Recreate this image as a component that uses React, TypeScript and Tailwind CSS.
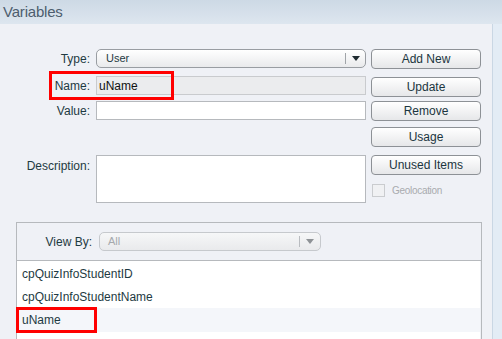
import React from "react"

const font = { fontFamily: '"Liberation Sans", Arial, sans-serif' }

function Btn({ label, className = "" }: { label: string; className?: string }) {
  return (
    <div
      className={`h-[20px] w-[110px] rounded-[4px] border border-[#8d9196] bg-gradient-to-b from-white to-[#e6e7e9] flex items-center justify-center text-[12px] text-[#1b3540] ${className}`}
    >
      {label}
    </div>
  )
}

function Arrow({ color }: { color: string }) {
  return (
    <svg width="8" height="5" viewBox="0 0 8 5">
      <path d="M0 0 H8 L4 5 Z" fill={color} />
    </svg>
  )
}

export default function App() {
  return (
    <div className="w-[502px] h-[339px] overflow-hidden bg-[#eff1f6] flex flex-col" style={font}>
      {/* title */}
      <div className="h-[24px] shrink-0 bg-gradient-to-b from-[#cdd9e5] to-[#dde6ef] flex items-center pl-[3px]">
        <span className="text-[15px] text-[#4d5d6e] tracking-[-0.2px]">Variables</span>
      </div>

      <div className="flex flex-1 min-h-0">
        <div className="w-[492px] flex flex-col">
          {/* form */}
          <div className="flex pt-[25px]">
            <div className="w-[371px] flex flex-col">
              <div className="flex items-center h-[19px]">
                <span className="w-[96px] pr-[6px] text-right text-[12px] text-[#1e3a42]">Type:</span>
                <div className="w-[270px] h-[19px] rounded-[5px] border border-[#999da2] bg-gradient-to-b from-white to-[#e9eaec] flex items-center">
                  <span className="flex-1 pl-[9px] text-[11px] text-[#1e3a42]">User</span>
                  <div className="w-px h-[11px] bg-[#a0a4a8]" />
                  <div className="w-[19px] flex justify-center">
                    <Arrow color="#1e2a30" />
                  </div>
                </div>
              </div>
              <div className="relative flex items-center h-[19px] mt-[8px]">
                <span className="w-[96px] pr-[6px] text-right text-[12px] text-[#1e3a42]">Name:</span>
                <div className="w-[270px] h-[19px] border border-[#c9cbce] bg-[#ebecee] flex items-center pl-[2px] text-[12px] text-[#111]">
                  uName
                </div>
                <div className="absolute left-[49px] top-[-5px] w-[125px] h-[29px] border-[3px] border-[#ff0000]" />
              </div>
              <div className="flex items-center h-[19px] mt-[6px]">
                <span className="w-[96px] pr-[6px] text-right text-[12px] text-[#1e3a42]">Value:</span>
                <div className="w-[270px] h-[19px] border border-[#b6b9bd] bg-white" />
              </div>
              <div className="flex items-start mt-[35px]">
                <span className="w-[96px] pr-[6px] pt-[2px] text-right text-[12px] text-[#1e3a42]">Description:</span>
                <div className="w-[270px] h-[48px] border border-[#b6b9bd] bg-white" />
              </div>
            </div>
            <div className="flex flex-col">
              <Btn label="Add New" />
              <Btn label="Update" className="mt-[8px]" />
              <Btn label="Remove" className="mt-[4px]" />
              <Btn label="Usage" className="mt-[6px]" />
              <Btn label="Unused Items" className="mt-[8px]" />
              <div className="flex items-center mt-[8px] pl-[1px]">
                <div className="w-[13px] h-[13px] border border-[#cacccf] bg-[#f0f1f3]" />
                <span className="ml-[7px] text-[10px] text-[#a9abae] tracking-[-0.3px]">Geolocation</span>
              </div>
            </div>
          </div>

          {/* list panel */}
          <div className="ml-[16px] mt-[19px] w-[466px] flex-1 border border-b-0 border-[#b6b9bd] flex flex-col">
            <div className="h-[38px] shrink-0 flex items-center border-b border-[#b6b9bd]">
              <span className="w-[82px] pr-[7px] text-right text-[12px] text-[#1e3a42]">View By:</span>
              <div className="w-[222px] h-[19px] rounded-[5px] border border-[#c6c9cd] bg-gradient-to-b from-[#f6f7f8] to-[#e9eaec] flex items-center">
                <span className="flex-1 pl-[8px] text-[11px] text-[#a6a9ad]">All</span>
                <div className="w-px h-[11px] bg-[#b9bcc0]" />
                <div className="w-[20px] flex justify-center">
                  <Arrow color="#8e9296" />
                </div>
              </div>
            </div>
            <div className="flex-1 bg-white flex flex-col pt-[1px] mr-[1px]">
              <div className="h-[23px] flex items-center pl-[5px] text-[12px] text-[#1e3a42]">cpQuizInfoStudentID</div>
              <div className="h-[23px] flex items-center pl-[5px] text-[12px] text-[#1e3a42]">cpQuizInfoStudentName</div>
              <div className="relative h-[24px] flex items-center pl-[5px] text-[12px] text-[#1e3a42] bg-[#f4f6fa]">
                uName
                <div className="absolute left-[-1px] top-[-1px] w-[81px] h-[26px] border-[3px] border-[#ff0000]" />
              </div>
            </div>
          </div>
        </div>
        <div className="flex-1 bg-[#e3ecf5] border-l border-[#cad7e4]" />
      </div>
    </div>
  )
}
